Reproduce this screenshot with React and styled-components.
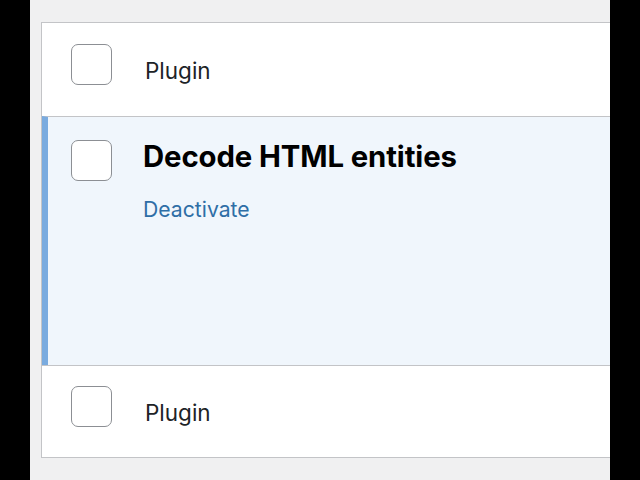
import React from "react";
import styled, { createGlobalStyle } from "styled-components";

const Global = createGlobalStyle`
  html, body {
    margin: 0;
    padding: 0;
    background: #000;
  }
  body {
    font-family: Inter, "Noto Sans", "Liberation Sans", sans-serif;
  }
`;

const Screen = styled.div`
  width: 640px;
  height: 480px;
  padding: 0 30px;
  box-sizing: border-box;
  background: #000;
`;

const Page = styled.div`
  height: 100%;
  background: #f0f0f1;
  padding: 22px 0 0 11px;
  box-sizing: border-box;
  overflow: hidden;
`;

const Table = styled.div`
  width: 700px;
  background: #fff;
  border: 1px solid #c3c4c7;
  display: flex;
  flex-direction: column;
`;

const Row = styled.div`
  display: flex;
  align-items: flex-start;
  height: ${(p) => p.$h}px;
  box-sizing: border-box;
  padding: ${(p) => (p.$active ? "23px 0 0 23px" : `${p.$top}px 0 0 29px`)};
  background: ${(p) => (p.$active ? "#f0f6fc" : "#fff")};
  border-left: ${(p) => (p.$active ? "6px solid #7aabdf" : "none")};
  & + & {
    border-top: 1px solid #c3c4c7;
  }
`;

const Check = styled.span`
  width: 41px;
  height: 41px;
  box-sizing: border-box;
  flex: none;
  border: 1.5px solid #8c8f94;
  border-radius: 7px;
  background: #fff;
`;

const Label = styled.span`
  margin: 6px 0 0 33px;
  font-size: 22.5px;
  line-height: 41px;
  color: #1d2327;
`;

const Info = styled.div`
  margin-left: 31px;
  display: flex;
  flex-direction: column;
`;

const Title = styled.strong`
  font-size: 29.3px;
  font-weight: 700;
  color: #000;
  line-height: 34px;
  letter-spacing: -0.1px;
`;

const Action = styled.a`
  margin-top: 22px;
  font-size: 21.2px;
  line-height: 26px;
  color: #2e6ea6;
  text-decoration: none;
`;

export default function App() {
  return (
    <Screen>
      <Global />
      <Page>
        <Table>
          <Row $h={93} $top={21}>
            <Check />
            <Label>Plugin</Label>
          </Row>
          <Row $active $h={249}>
            <Check />
            <Info>
              <Title>Decode HTML entities</Title>
              <Action href="#">Deactivate</Action>
            </Info>
          </Row>
          <Row $h={92} $top={20}>
            <Check />
            <Label>Plugin</Label>
          </Row>
        </Table>
      </Page>
    </Screen>
  );
}
